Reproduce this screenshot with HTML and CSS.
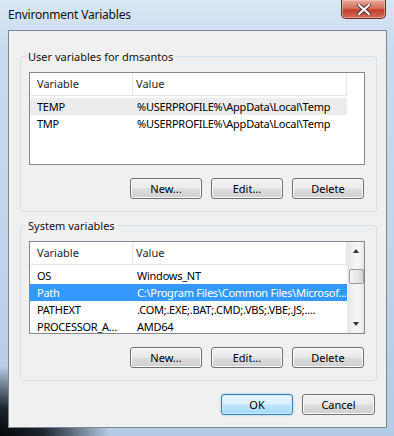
FILE: index.html
```html
<!DOCTYPE html>
<html lang="en">

<head>
    <meta charset="UTF-8">
    <title>Environment Variables</title>
    <link rel="stylesheet" href="styles.css">
</head>

<body>
    <div class="window">
        <div class="titlebar">
            <span class="title">Environment Variables</span>
            <button class="close">
                <svg width="14" height="11" viewBox="0 0 14 11">
                    <path d="M2 1 L12 10 M12 1 L2 10" stroke="#4a3030" stroke-width="4" stroke-linecap="round" />
                    <path d="M2 1 L12 10 M12 1 L2 10" stroke="#fff" stroke-width="2.2" stroke-linecap="round" />
                </svg>
            </button>
        </div>

        <div class="client">
            <fieldset class="group">
                <legend>User variables for dmsantos</legend>
                <div class="list">
                    <div class="list-main">
                        <div class="header">
                            <span class="col-var">Variable</span>
                            <span class="col-val">Value</span>
                        </div>
                        <div class="row hot">
                            <span class="col-var">TEMP</span>
                            <span class="col-val">%USERPROFILE%\AppData\Local\Temp</span>
                        </div>
                        <div class="row">
                            <span class="col-var">TMP</span>
                            <span class="col-val">%USERPROFILE%\AppData\Local\Temp</span>
                        </div>
                    </div>
                </div>
                <div class="buttons">
                    <button class="btn">New...</button>
                    <button class="btn">Edit...</button>
                    <button class="btn">Delete</button>
                </div>
            </fieldset>

            <fieldset class="group system">
                <legend>System variables</legend>
                <div class="list">
                    <div class="list-main">
                        <div class="header">
                            <span class="col-var">Variable</span>
                            <span class="col-val">Value</span>
                        </div>
                        <div class="row">
                            <span class="col-var">OS</span>
                            <span class="col-val">Windows_NT</span>
                        </div>
                        <div class="row selected">
                            <span class="col-var">Path</span>
                            <span class="col-val">C:\Program Files\Common Files\Microsof...</span>
                        </div>
                        <div class="row">
                            <span class="col-var">PATHEXT</span>
                            <span class="col-val">.COM;.EXE;.BAT;.CMD;.VBS;.VBE;.JS;....</span>
                        </div>
                        <div class="row">
                            <span class="col-var">PROCESSOR_A...</span>
                            <span class="col-val">AMD64</span>
                        </div>
                    </div>
                    <div class="scrollbar">
                        <span class="arrow up"></span>
                        <span class="thumb"></span>
                        <span class="arrow down"></span>
                    </div>
                </div>
                <div class="buttons">
                    <button class="btn">New...</button>
                    <button class="btn">Edit...</button>
                    <button class="btn">Delete</button>
                </div>
            </fieldset>

            <div class="dialog-buttons">
                <button class="btn default">OK</button>
                <button class="btn cancel">Cancel</button>
            </div>
        </div>
    </div>
</body>

</html>
```

FILE: styles.css
```css
body {
    margin: 0;
    padding: 0;
    font-family: "Segoe UI", "Noto Sans", "Open Sans", sans-serif;
    font-size: 11px;
    color: #000;
}

.window {
    width: 394px;
    height: 436px;
    box-sizing: border-box;
    padding: 0 7px 8px 8px;
    display: flex;
    flex-direction: column;
    background:
        radial-gradient(ellipse 110px 70px at 0 436px, #050505 0%, #1e2630 40%, rgba(160, 185, 210, 0) 100%),
        linear-gradient(180deg, #d9e6f3 0%, #c9dbee 12%, #bfd3ea 60%, #b4cbe5 100%);
}

.titlebar {
    height: 30px;
    flex: none;
    display: flex;
    align-items: flex-start;
    justify-content: space-between;
}

.title {
    margin-top: 7px;
    font-size: 12px;
    letter-spacing: -0.2px;
    line-height: 15px;
    color: #111;
}

.close {
    width: 45px;
    height: 19px;
    margin-right: 1px;
    padding: 0;
    border: 1px solid #6b2a25;
    border-top: none;
    border-radius: 0 0 5px 5px;
    background: linear-gradient(180deg, #e9a99f 0%, #d7715f 45%, #c0402d 55%, #d06a55 100%);
    box-shadow: inset 0 0 0 1px rgba(255, 210, 200, 0.5);
    display: flex;
    align-items: center;
    justify-content: center;
}

.client {
    flex: 1;
    border: 1px solid #7d8894;
    background: #f0f0f0;
    display: flex;
    flex-direction: column;
    padding: 0 9px 0 11px;
}

.group {
    margin: 18px 0 0 0;
    width: 357px;
    box-sizing: border-box;
    border: 1px solid #d5dfe5;
    border-radius: 3px;
    padding: 8px 0 12px 8px;
}

.group.system {
    margin-top: 6px;
}

.group legend {
    padding: 0 2px;
    margin-left: -3px;
    line-height: 15px;
    color: #111;
}

.list {
    width: 336px;
    height: 93px;
    box-sizing: border-box;
    border: 1px solid #828790;
    background: #fff;
    display: flex;
}

.list-main {
    width: 317px;
}

.header {
    display: flex;
    height: 22px;
    border-bottom: 1px solid #e5e5e5;
    margin-bottom: 2px;
    color: #1e1e1e;
}

.header span {
    line-height: 22px;
    border-right: 1px solid #e5e5e5;
}

.row {
    display: flex;
    height: 17px;
    line-height: 17px;
    letter-spacing: -0.25px;
}

.col-var {
    width: 103px;
    box-sizing: border-box;
    padding-left: 7px;
    white-space: nowrap;
}

.col-val {
    width: 214px;
    box-sizing: border-box;
    padding-left: 4px;
    white-space: nowrap;
    overflow: hidden;
}

.header .col-val {
    padding-left: 3px;
}

.row.hot {
    background: #ececec;
}

.row.selected {
    background: #3399ff;
    color: #fff;
}

.scrollbar {
    width: 17px;
    display: flex;
    flex-direction: column;
    align-items: center;
    background: linear-gradient(90deg, #e6e6e6, #f4f4f4 40%, #f4f4f4 70%, #e6e6e6);
    border-left: 1px solid #ececec;
    box-sizing: border-box;
}

.arrow {
    width: 0;
    height: 0;
    border-left: 3.5px solid transparent;
    border-right: 3.5px solid transparent;
}

.arrow.up {
    margin-top: 7px;
    border-bottom: 4px solid #333;
}

.arrow.down {
    margin-top: auto;
    margin-bottom: 7px;
    border-top: 4px solid #333;
}

.thumb {
    margin-top: 16px;
    width: 15px;
    height: 15px;
    box-sizing: border-box;
    border: 1px solid #9b9b9b;
    border-radius: 2px;
    background: linear-gradient(90deg, #f3f3f3, #e8e8e8 50%, #d6d6d6);
}

.buttons {
    width: 336px;
    margin-top: 13px;
    display: flex;
    justify-content: flex-end;
    gap: 9px;
    padding-right: 1px;
    box-sizing: border-box;
}

.btn {
    width: 72px;
    height: 21px;
    padding: 0;
    font-family: inherit;
    font-size: 11px;
    color: #000;
    border: 1px solid #707070;
    border-radius: 3px;
    background: linear-gradient(180deg, #f2f2f2 0%, #ebebeb 48%, #dddddd 52%, #cfcfcf 100%);
    box-shadow: inset 0 0 0 1px #fbfbfb;
}

.btn.default {
    border-color: #3c7fb1;
    background: linear-gradient(180deg, #eaf6fd 0%, #d9f0fc 48%, #bee6fd 52%, #a7d9f5 100%);
    box-shadow: inset 0 0 0 1px #c8ecfb, 0 0 2px #7fc4ec;
}

.btn.cancel {
    width: 73px;
}

.dialog-buttons {
    margin-top: 13px;
    display: flex;
    justify-content: flex-end;
    gap: 9px;
    padding-right: 2px;
}
```
